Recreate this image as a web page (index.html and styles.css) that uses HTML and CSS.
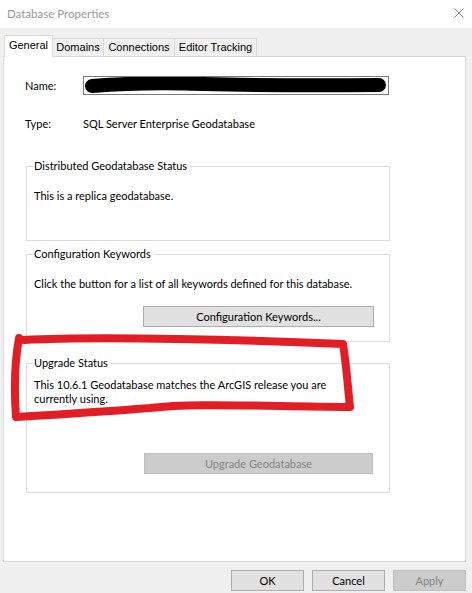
FILE: index.html
```html
<!DOCTYPE html>
<html>
<head>
<meta charset="utf-8">
<link rel="stylesheet" href="styles.css">
</head>
<body>
<div class="window">
  <div class="titlebar">
    <span class="title">Database Properties</span>
    <svg class="close" width="10" height="10" viewBox="0 0 10 10"><path d="M0.5 0.5 L9.5 9.5 M9.5 0.5 L0.5 9.5" stroke="#8a8a8a" stroke-width="1" fill="none"/></svg>
  </div>
  <div class="tabs">
    <div class="tab active t1">General</div>
    <div class="tab t2">Domains</div>
    <div class="tab t3">Connections</div>
    <div class="tab t4">Editor Tracking</div>
  </div>
  <div class="panel">
    <div class="row name-row">
      <span class="label">Name:</span>
      <div class="textbox">
        <svg class="scribble" width="306" height="19" viewBox="0 0 306 19"><path d="M9 10 Q 60 6 120 8 Q 200 10 296 9" stroke="#000" stroke-width="14" stroke-linecap="round" fill="none"/><path d="M60 5 Q 75 1 95 3" stroke="#000" stroke-width="5" stroke-linecap="round" fill="none"/></svg>
      </div>
    </div>
    <div class="row type-row">
      <span class="label">Type:</span>
      <span class="value">SQL Server Enterprise Geodatabase</span>
    </div>
    <fieldset class="group g1">
      <legend>Distributed Geodatabase Status</legend>
      <p class="gtext">This is a replica geodatabase.</p>
    </fieldset>
    <fieldset class="group g2">
      <legend>Configuration Keywords</legend>
      <p class="gtext">Click the button for a list of all keywords defined for this database.</p>
      <div class="btnrow"><button class="btn wide">Configuration Keywords...</button></div>
    </fieldset>
    <fieldset class="group g3">
      <legend>Upgrade Status</legend>
      <p class="gtext">This 10.6.1 Geodatabase matches the ArcGIS release you are currently using.</p>
      <div class="btnrow"><button class="btn wide2 disabled">Upgrade Geodatabase</button></div>
    </fieldset>
  </div>
  <div class="footer">
    <button class="btn fbtn">OK</button>
    <button class="btn fbtn">Cancel</button>
    <button class="btn fbtn disabled">Apply</button>
  </div>
  <svg class="annotation" width="472" height="593" viewBox="0 0 472 593"><path d="M24 340 C 100 336 250 340 343 344 C 347 370 348 390 350 407 C 250 406 190 403 150 408 C 100 412 50 415 16 417 C 14 390 15 360 19 338" stroke="#e31d24" stroke-width="8" stroke-linecap="round" stroke-linejoin="round" fill="none"/></svg>
</div>
</body>
</html>
```
FILE: styles.css
```css
html, body {
  margin: 0;
  padding: 0;
}
body {
  width: 472px;
  height: 593px;
  overflow: hidden;
  background: #f0f0f0;
  font-family: Lato, "Noto Sans", sans-serif;
  font-size: 11px;
  color: #000;
}
.window {
  position: relative;
  width: 472px;
  height: 593px;
}
.titlebar {
  height: 28px;
  background: #fff;
  display: flex;
  align-items: center;
  justify-content: space-between;
  padding: 0 8px 2px 7px;
  box-sizing: border-box;
}
.title {
  color: #9a9a9a;
  font-size: 11.5px;
}
.close {
  display: block;
}
.tabs {
  display: flex;
  align-items: flex-end;
  margin-top: 7px;
  padding-left: 4px;
  position: relative;
  z-index: 1;
  height: 21px;
}
.tab {
  font-family: "Liberation Sans", Arial, sans-serif;
  font-size: 11px;
  height: 18px;
  box-sizing: border-box;
  border: 1px solid #d9d9d9;
  border-bottom: none;
  border-left: none;
  background: #f0f0f0;
  text-align: center;
  line-height: 17px;
  white-space: nowrap;
}
.tab.active {
  height: 22px;
  background: #fff;
  border-left: 1px solid #d9d9d9;
  line-height: 19px;
  margin-bottom: -1px;
}
.t1 { width: 49px; }
.t2 { width: 51px; }
.t3 { width: 71px; }
.t4 { width: 82px; }
.panel {
  margin: 0 6px 0 3px;
  height: 506px;
  box-sizing: border-box;
  border: 1px solid #d9d9d9;
  background: #fff;
  padding: 19px 0 0 21px;
}
.row {
  display: flex;
  align-items: center;
}
.label {
  width: 58px;
}
.name-row {
  height: 19px;
}
.textbox {
  width: 306px;
  height: 19px;
  box-sizing: border-box;
  border: 1px solid #7a7a7a;
  position: relative;
  overflow: hidden;
}
.scribble {
  position: absolute;
  left: -1px;
  top: -1px;
}
.type-row {
  margin-top: 20px;
  height: 17px;
}
.group {
  margin: 0 0 0 1px;
  width: 364px;
  box-sizing: border-box;
  border: 1px solid #dcdcdc;
  padding: 0 15px 0 7px;
  min-width: 0;
}
.group legend {
  padding: 0 3px 0 0;
  line-height: 16px;
}
.gtext {
  margin: 0;
  line-height: 14px;
}
.g1 {
  margin-top: 26px;
  height: 83px;
}
.g1 .gtext {
  margin-top: 15px;
}
.g2 {
  margin-top: 5px;
  height: 96px;
}
.g2 .gtext {
  margin-top: 15px;
}
.g2 .btnrow {
  margin-top: 15px;
}
.g3 {
  margin-top: 13px;
  height: 138px;
}
.g3 .gtext {
  margin-top: 7px;
  width: 335px;
}
.g3 .btnrow {
  margin-top: 47px;
}
.btnrow {
  display: flex;
  justify-content: flex-end;
}
.btn {
  font-family: Lato, "Noto Sans", sans-serif;
  font-size: 11px;
  background: #e1e1e1;
  border: 1px solid #adadad;
  color: #000;
  height: 21px;
  padding: 0;
  margin: 0;
  line-height: 18px;
}
.btn.wide {
  width: 231px;
}
.btn.wide2 {
  width: 229px;
  margin-right: 1px;
}
.btn.disabled {
  background: #cccccc;
  border-color: #bfbfbf;
  color: #838383;
}
.footer {
  display: flex;
  justify-content: flex-end;
  gap: 8px;
  margin-top: 8px;
  padding-right: 6px;
}
.fbtn {
  width: 73px;
}
.annotation {
  position: absolute;
  left: 0;
  top: 0;
  pointer-events: none;
}
```
